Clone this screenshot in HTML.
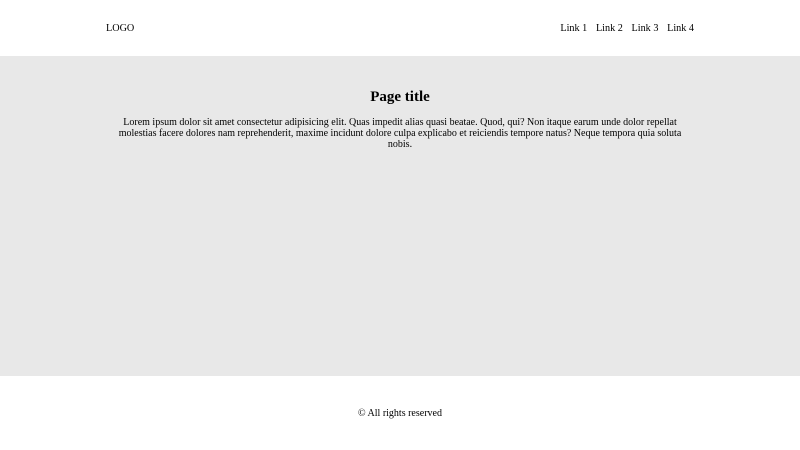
<!DOCTYPE html>
<html><head><style>
body{margin:0;font-family:"Liberation Serif",serif;color:#000;width:800px;height:450px;overflow:hidden;background:#fff}
header{height:56px;position:relative;font-size:10.2px}
.logo{position:absolute;left:106px;top:23px}
nav{position:absolute;right:106px;top:23px}
nav span{margin-left:8.7px}
main{background:#e8e8e8;height:320px;text-align:center;position:relative}
h1{margin:0;font-size:15px;position:absolute;width:800px;top:0;padding-top:33px}
p{position:absolute;left:114px;width:572px;top:61px;margin:0;font-size:10px;line-height:11px}
footer{text-align:center;font-size:10px;padding-top:32px}
</style></head><body>
<header><span class="logo">LOGO</span><nav><span>Link 1</span><span>Link 2</span><span>Link 3</span><span>Link 4</span></nav></header>
<main><h1>Page title</h1><p>Lorem ipsum dolor sit amet consectetur adipisicing elit. Quas impedit alias quasi beatae. Quod, qui? Non itaque earum unde dolor repellat molestias facere dolores nam reprehenderit, maxime incidunt dolore culpa explicabo et reiciendis tempore natus? Neque tempora quia soluta nobis.</p></main>
<footer>© All rights reserved</footer>
</body></html>
